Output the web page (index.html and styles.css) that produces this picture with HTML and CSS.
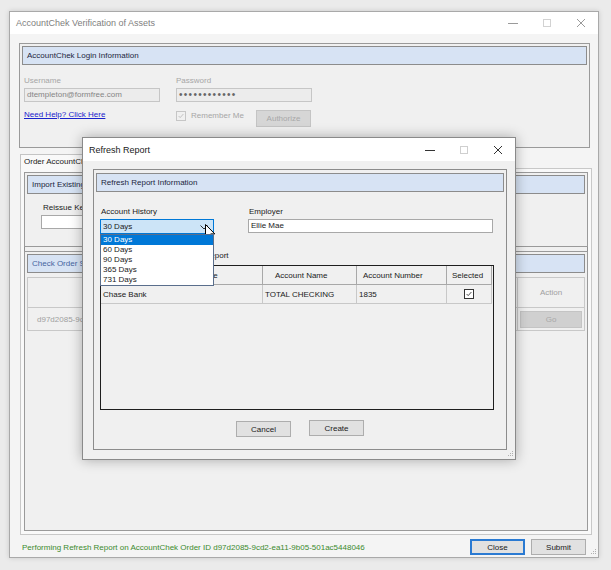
FILE: index.html
```html
<html>
<head>
	<title>AccountChek Verification of Assets</title>
	<link rel="stylesheet" href="styles.css">
</head>
<body>
	<div class="app">
		<div class="titlebar">
			<span class="title">AccountChek Verification of Assets</span>
			<div class="win_ctrls">
				<span class="ctrl"><svg width="10" height="10" viewBox="0 0 10 10"><path d="M0 5.5h10" stroke="#9a9a9a" stroke-width="1"/></svg></span>
				<span class="ctrl"><svg width="10" height="10" viewBox="0 0 10 10"><rect x="1.5" y="1.5" width="7" height="7" fill="none" stroke="#d2d2d2"/></svg></span>
				<span class="ctrl"><svg width="10" height="10" viewBox="0 0 10 10"><path d="M1 1L9 9M9 1L1 9" stroke="#9a9a9a" stroke-width="1"/></svg></span>
			</div>
		</div>
		<div class="app_body">
			<div class="group login">
				<div class="group_head">AccountChek Login Information</div>
				<div class="login_grid">
					<div class="field">
						<div class="lbl dim">Username</div>
						<div class="txt dis">dtempleton@formfree.com</div>
					</div>
					<div class="field">
						<div class="lbl dim">Password</div>
						<div class="txt dis pw">&bull;&bull;&bull;&bull;&bull;&bull;&bull;&bull;&bull;&bull;&bull;&bull;</div>
					</div>
					<a class="help" href="#">Need Help? Click Here</a>
					<div class="remember">
						<span class="chk dis_chk"><svg width="10" height="10" viewBox="0 0 10 10"><path d="M2 5l2 2 4-4.5" fill="none" stroke="#b8b8b8" stroke-width="1"/></svg></span>
						<span class="dim">Remember Me</span>
						<span class="btn dis_btn">Authorize</span>
					</div>
				</div>
			</div>

			<div class="tabs">
				<div class="tab_strip"><span class="tab">Order AccountChek</span></div>
				<div class="tab_page">
					<div class="panel">
						<div class="group import">
							<div class="group_head">Import Existing AccountChek Order</div>
							<div class="reissue">
								<div class="lbl">Reissue Key</div>
								<div class="txt white"></div>
							</div>
						</div>
						<div class="group check">
							<div class="group_head blue">Check Order Status</div>
							<div class="order_table">
								<div class="ot_cell"></div>
								<div class="ot_cell ot_head">Action</div>
								<div class="ot_cell ot_id">d97d2085-9cd2-ea11-9b05-501ac5448046</div>
								<div class="ot_cell ot_go"><span class="btn dis_btn go">Go</span></div>
							</div>
						</div>
					</div>
				</div>
			</div>

			<div class="statusbar">
				<span class="status_msg">Performing Refresh Report on AccountChek Order ID d97d2085-9cd2-ea11-9b05-501ac5448046</span>
				<span class="btn focus">Close</span>
				<span class="btn">Submit</span>
			</div>
		</div>
		<svg class="grip app_grip" width="6" height="6" viewBox="0 0 6 6"><g fill="#b0b0b0"><rect x="4" y="0" width="1" height="1"/><rect x="2" y="2" width="1" height="1"/><rect x="4" y="2" width="1" height="1"/><rect x="0" y="4" width="1" height="1"/><rect x="2" y="4" width="1" height="1"/><rect x="4" y="4" width="1" height="1"/></g></svg>
	</div>

	<div class="dialog">
		<div class="titlebar dlg_title">
			<span class="title">Refresh Report</span>
			<div class="win_ctrls">
				<span class="ctrl"><svg width="10" height="10" viewBox="0 0 10 10"><path d="M0 5.5h10" stroke="#333" stroke-width="1"/></svg></span>
				<span class="ctrl"><svg width="10" height="10" viewBox="0 0 10 10"><rect x="1.5" y="1.5" width="7" height="7" fill="none" stroke="#cfcfcf"/></svg></span>
				<span class="ctrl"><svg width="10" height="10" viewBox="0 0 10 10"><path d="M1 1L9 9M9 1L1 9" stroke="#333" stroke-width="1"/></svg></span>
			</div>
		</div>
		<div class="dlg_body">
			<div class="group rr">
				<div class="group_head">Refresh Report Information</div>
				<div class="rr_fields">
					<div class="rr_field">
						<div class="lbl">Account History</div>
						<div class="combo">
							<span>30 Days</span>
							<svg class="combo_arrow" width="8" height="5" viewBox="0 0 8 5"><path d="M0.5 0.5L4 4L7.5 0.5" fill="none" stroke="#333"/></svg>
							<div class="dropdown">
								<div class="dd_item sel">30 Days</div>
								<div class="dd_item">60 Days</div>
								<div class="dd_item">90 Days</div>
								<div class="dd_item">365 Days</div>
								<div class="dd_item">731 Days</div>
							</div>
						</div>
					</div>
					<div class="rr_field">
						<div class="lbl">Employer</div>
						<div class="txt white employer">Ellie Mae</div>
					</div>
				</div>
				<div class="lbl accounts_lbl">Select Accounts to Include in Report</div>
				<div class="grid">
					<div class="gcell ghead c1">Institution Name</div>
					<div class="gcell ghead c2">Account Name</div>
					<div class="gcell ghead c3">Account Number</div>
					<div class="gcell ghead c4">Selected</div>
					<div class="gcell grow">Chase Bank</div>
					<div class="gcell grow">TOTAL CHECKING</div>
					<div class="gcell grow">1835</div>
					<div class="gcell grow gchk"><span class="chk"><svg width="10" height="10" viewBox="0 0 10 10"><path d="M2 5l2 2 4-4.5" fill="none" stroke="#222" stroke-width="1"/></svg></span></div>
				</div>
				<div class="rr_buttons">
					<span class="btn cancel">Cancel</span>
					<span class="btn">Create</span>
				</div>
			</div>
		</div>
		<svg class="grip dlg_grip" width="6" height="6" viewBox="0 0 6 6"><g fill="#b0b0b0"><rect x="4" y="0" width="1" height="1"/><rect x="2" y="2" width="1" height="1"/><rect x="4" y="2" width="1" height="1"/><rect x="0" y="4" width="1" height="1"/><rect x="2" y="4" width="1" height="1"/><rect x="4" y="4" width="1" height="1"/></g></svg>
	</div>

	<svg class="cursor" width="11" height="17" viewBox="0 0 11 17"><path d="M0.5 0.5V13.5L3.6 10.6L5.8 15.6L7.8 14.7L5.7 9.9H9.8Z" fill="#fff" stroke="#000" stroke-width="1" stroke-linejoin="round"/></svg>
</body>
</html>
```
FILE: styles.css
```css
body {
	margin: 0;
	background-color: #ebebeb;
	font-family: "Liberation Sans", Arial, sans-serif;
	font-size: 8px;
	color: #1a1a1a;
	position: relative;
	width: 611px;
	height: 570px;
	overflow: hidden;
}

.app {
	position: relative;
	margin: 11px 0 0 9px;
	width: 590px;
	height: 547px;
	box-sizing: border-box;
	border: 1px solid #a9a9a9;
	background-color: #f4f4f4;
	box-shadow: 0 0 5px rgba(0,0,0,0.15);
}

.titlebar {
	height: 22px;
	background-color: #fff;
	display: flex;
	align-items: center;
	padding-left: 6px;
}
.titlebar .title {
	font-size: 9px;
	color: #808080;
}
.win_ctrls {
	margin-left: auto;
	display: flex;
	height: 100%;
}
.ctrl {
	width: 34px;
	display: flex;
	align-items: center;
	justify-content: center;
}

.app_body {
	padding: 9px 0 0 9px;
}

.group {
	box-sizing: border-box;
	border: 1px solid #9a9a9a;
	padding: 2px;
	background-color: #f0f0f0;
}
.group_head {
	height: 19px;
	box-sizing: border-box;
	border: 1px solid #8c8c8c;
	background-color: #d7e3f4;
	line-height: 17px;
	padding-left: 4px;
	color: #1c2640;
}
.group_head.blue {
	color: #4563a0;
}

.lbl {
	line-height: 10px;
	white-space: nowrap;
}
.dim {
	color: #a6a6a6;
}
.txt {
	box-sizing: border-box;
	height: 14px;
	line-height: 12px;
	padding-left: 2px;
	border: 1px solid #c6c6c6;
	white-space: nowrap;
	overflow: hidden;
}
.txt.dis {
	background-color: #ececec;
	color: #858585;
}
.txt.white {
	background-color: #fff;
	border-color: #a8a8a8;
}
.txt.pw {
	font-size: 10px;
	letter-spacing: 1.3px;
	color: #666;
}

.btn {
	box-sizing: border-box;
	display: inline-flex;
	align-items: center;
	justify-content: center;
	width: 55px;
	height: 16px;
	background-color: #e1e1e1;
	border: 1px solid #adadad;
	color: #1a1a1a;
}
.btn.dis_btn {
	background-color: #d6d6d6;
	border-color: #c4c4c4;
	color: #a8a8a8;
}
.btn.focus {
	border: 2px solid #2a7ad2;
}

.chk {
	box-sizing: border-box;
	width: 10px;
	height: 10px;
	border: 1px solid #333;
	background-color: #fff;
	display: inline-flex;
	align-items: center;
	justify-content: center;
}
.chk svg {
	width: 8px;
	height: 8px;
}
.chk.dis_chk {
	border-color: #c6c6c6;
	background-color: #f0f0f0;
}

/* login */
.group.login {
	width: 571px;
	height: 105px;
}
.login_grid {
	display: grid;
	grid-template-columns: 152px auto;
	row-gap: 8px;
	padding: 11px 0 0 2px;
}
.field .txt {
	margin-top: 2px;
	width: 136px;
}
.help {
	color: #1a22cc;
	line-height: 10px;
	text-decoration: underline;
}
.remember {
	display: grid;
	grid-template-columns: 15px 65px auto;
	align-items: start;
}
.remember .chk {
	margin-top: 1px;
}
.remember .dim {
	line-height: 11px;
}
.remember .btn {
	height: 17px;
}

/* tabs */
.tabs {
	margin: 6px 0 0 1px;
	width: 572px;
}
.tab_strip {
	height: 14px;
	display: flex;
}
.tab {
	box-sizing: border-box;
	border: 1px solid #c4c4c4;
	border-bottom: none;
	background-color: #f9f9f9;
	padding: 0 8px 0 3px;
	line-height: 14px;
	height: 15px;
}
.tab_page {
	box-sizing: border-box;
	height: 367px;
	border: 1px solid #c8c8c8;
	background-color: #f9f9f9;
	padding: 3px;
}
.panel {
	box-sizing: border-box;
	height: 100%;
	border: 1px solid #8f8f8f;
	background-color: #f0f0f0;
	display: flex;
	flex-direction: column;
}
.group.import {
	margin: -1px -1px 0 -1px;
	height: 75px;
}
.reissue {
	padding: 9px 0 0 14px;
}
.reissue .lbl {
	padding-left: 2px;
}
.reissue .txt {
	margin-top: 2px;
	width: 160px;
}
.group.check {
	margin: 4px -1px -1px -1px;
	flex: 1;
}
.order_table {
	margin-top: 4px;
	display: grid;
	grid-template-columns: 1fr 67px;
	grid-template-rows: 30px 23px;
	border: 1px solid #c8c8c8;
	border-right: none;
	border-bottom: none;
}
.ot_cell {
	border-right: 1px solid #c8c8c8;
	border-bottom: 1px solid #c8c8c8;
	display: flex;
	align-items: center;
}
.ot_head {
	justify-content: center;
	color: #a0a0a0;
}
.ot_id {
	padding-left: 9px;
	color: #a0a0a0;
}
.ot_go {
	padding: 0 2px;
}
.btn.go {
	width: 62px;
	height: 17px;
	background-color: #d0d0d0;
}

/* status */
.statusbar {
	height: 24px;
	display: flex;
	align-items: center;
	gap: 6px;
	padding: 0 12px 0 3px;
}
.status_msg {
	color: #3b8a2e;
	margin-right: auto;
}

.grip {
	position: absolute;
	right: 1px;
	bottom: 2px;
}

/* dialog */
.dialog {
	position: absolute;
	left: 82px;
	top: 137px;
	width: 434px;
	height: 323px;
	box-sizing: border-box;
	border: 1px solid #8a8a8a;
	background-color: #f0f0f0;
	box-shadow: 0 0 12px rgba(0,0,0,0.3);
}
.dlg_title {
	height: 23px;
}
.dlg_title .title {
	color: #1a1a1a;
}
.dlg_body {
	padding: 8px 0 0 10px;
}
.group.rr {
	width: 414px;
	height: 281px;
	padding: 3px 2px 0 2px;
	border-color: #8c8c8c;
}
.rr_fields {
	display: flex;
	gap: 34px;
	margin-top: 15px;
	padding-left: 4px;
}
.rr_field .lbl {
	padding-left: 1px;
}
.combo {
	position: relative;
	box-sizing: border-box;
	margin-top: 2px;
	width: 114px;
	height: 15px;
	border: 1px solid #0078d7;
	background-color: #cce4f7;
	line-height: 13px;
	padding-left: 2px;
}
.combo_arrow {
	position: absolute;
	right: 5px;
	top: 5px;
}
.dropdown {
	position: absolute;
	left: -1px;
	top: 14px;
	width: 114px;
	box-sizing: border-box;
	border: 1px solid #5a6e8c;
	background-color: #fff;
	z-index: 2;
}
.dd_item {
	height: 10px;
	line-height: 10px;
	padding-left: 2px;
}
.dd_item.sel {
	background-color: #0078d7;
	color: #fff;
}
.employer {
	margin-top: 2px;
	width: 245px;
}
.accounts_lbl {
	margin: 17px 0 0 4px;
}
.grid {
	margin: 4px 0 0 4px;
	width: 394px;
	height: 145px;
	box-sizing: border-box;
	border: 1px solid #1e1e1e;
	display: grid;
	grid-template-columns: 162px 94px 90px 45px;
	grid-template-rows: 19px 19px;
	align-content: start;
}
.gcell {
	box-sizing: border-box;
	border-right: 1px solid #a8a8a8;
	border-bottom: 1px solid #a8a8a8;
	display: flex;
	align-items: center;
	white-space: nowrap;
	overflow: hidden;
}
.ghead.c1 { padding-left: 59px; }
.ghead.c2 { padding-left: 12px; }
.ghead.c3 { padding-left: 6px; }
.ghead.c4 { padding-left: 5px; }
.grow {
	padding-left: 2px;
	border-color: #c8c8c8;
}
.gchk {
	justify-content: center;
	padding-left: 0;
}
.rr_buttons {
	margin-top: 10px;
	display: flex;
	justify-content: center;
	gap: 18px;
}
.rr_buttons .cancel {
	margin-top: 1px;
}
.dlg_grip {
	right: 1px;
	bottom: 2px;
}

.cursor {
	position: absolute;
	left: 205px;
	top: 224px;
}
```
